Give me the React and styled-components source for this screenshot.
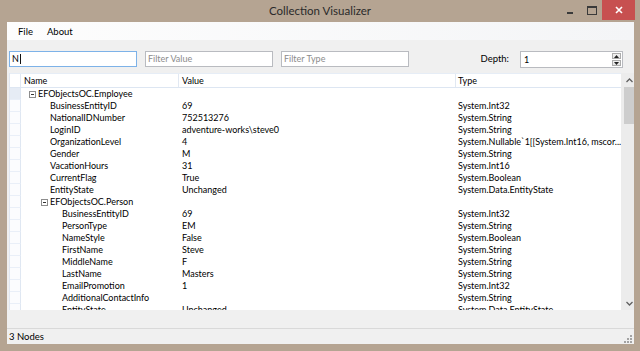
import React from 'react';
import styled, { createGlobalStyle } from 'styled-components';

const GlobalStyle = createGlobalStyle`
  html, body {
    margin: 0;
    padding: 0;
    background: #b5a492;
  }
  body {
    font-family: Lato, "Open Sans", sans-serif;
    color: #000;
  }
`;

const Window = styled.div`
  width: 640px;
  height: 351px;
  display: flex;
  flex-direction: column;
  background: #b5a492;
  overflow: hidden;
`;

const TitleBar = styled.div`
  height: 22px;
  display: grid;
  grid-template-columns: 1fr auto 1fr;
  align-items: start;
`;

const Title = styled.div`
  grid-column: 2;
  line-height: 22px;
  font-size: 11.5px;
  color: #2a2a2a;
`;

const Controls = styled.div`
  grid-column: 3;
  justify-self: end;
  display: flex;
  align-items: flex-start;
  margin-right: 5px;
`;

const CtrlButton = styled.div`
  width: ${(p) => p.w}px;
  height: 20px;
  display: flex;
  align-items: center;
  justify-content: center;
  background: ${(p) => (p.close ? '#c75050' : 'transparent')};
`;

const Client = styled.div`
  flex: 1;
  margin: 0 6px 7px 7px;
  display: flex;
  flex-direction: column;
  background: #f0f0f0;
  min-height: 0;
`;

const MenuBar = styled.div`
  height: 18px;
  display: flex;
  align-items: center;
  padding-left: 4px;
  background: linear-gradient(to right, #fdfdfd, #f4f5f7);
`;

const MenuItem = styled.div`
  padding: 0 7px;
  font-size: 9.5px;
`;

const Toolbar = styled.div`
  height: 33px;
  box-sizing: border-box;
  padding: 11px 11px 0 2px;
  display: flex;
  align-items: flex-start;
  gap: 8px;
`;

const FilterInput = styled.div`
  width: 128px;
  height: 16px;
  box-sizing: border-box;
  border: 1px solid ${(p) => (p.focused ? '#7db2e8' : '#b9bbc0')};
  background: #fff;
  padding: 0 2px;
  font-size: 9px;
  line-height: 14px;
  color: ${(p) => (p.placeholder ? '#8c8c8c' : '#000')};
  display: flex;
  align-items: center;
`;

const Caret = styled.span`
  display: inline-block;
  width: 1px;
  height: 10px;
  background: #111;
  margin-left: 1px;
`;

const Spacer = styled.div`
  flex: 1;
`;

const DepthLabel = styled.div`
  font-size: 9.5px;
  line-height: 16px;
  margin-right: 3px;
`;

const NumericBox = styled.div`
  width: 103px;
  height: 17px;
  box-sizing: border-box;
  border: 1px solid #b9bbc0;
  background: #fff;
  display: flex;
  font-size: 9px;
`;

const NumericValue = styled.div`
  flex: 1;
  padding: 1px 3px;
  line-height: 13px;
`;

const SpinColumn = styled.div`
  width: 9px;
  display: flex;
  flex-direction: column;
  gap: 1px;
  padding: 1px 1px 1px 0;
`;

const SpinButton = styled.div`
  flex: 1;
  border: 1px solid #acacac;
  background: linear-gradient(#f2f2f2, #e4e4e4);
  display: flex;
  align-items: center;
  justify-content: center;
`;

const GridArea = styled.div`
  height: 237px;
  margin: 0 0 18px 2px;
  display: flex;
`;

const Grid = styled.div`
  flex: 1;
  display: flex;
  flex-direction: column;
  background: #fff;
  border-left: 1px solid #dfe6f0;
  overflow: hidden;
  font-size: 9px;
`;

const columns = '11px 158px 277px 1fr';

const HeaderRow = styled.div`
  display: grid;
  grid-template-columns: ${columns};
  height: 15px;
  flex-shrink: 0;
  box-sizing: border-box;
  border-bottom: 1px solid #dde6f2;
  border-top: 1px solid #e6edf6;
`;

const HeaderCell = styled.div`
  border-right: 1px solid ${(p) => (p.last ? 'transparent' : '#e1e8f2')};
  padding-left: ${(p) => p.pad}px;
  line-height: 13px;
  white-space: nowrap;
`;

const Row = styled.div`
  display: grid;
  grid-template-columns: ${columns};
  height: 12px;
  flex-shrink: 0;
  line-height: 12px;
`;

const RowHeader = styled.div`
  box-sizing: border-box;
  border-right: 1px solid #dfe7f2;
  border-bottom: 1px solid #e9eff8;
  background: ${(p) => (p.current ? '#e6ecf5' : '#fbfcfe')};
`;

const NameCell = styled.div`
  display: flex;
  align-items: center;
  padding-left: ${(p) => 8 + p.level * 12}px;
  white-space: nowrap;
  overflow: hidden;
`;

const ExpanderSlot = styled.div`
  width: 9px;
  flex-shrink: 0;
  display: flex;
  align-items: center;
`;

const TextCell = styled.div`
  padding-left: ${(p) => p.pad}px;
  padding-right: 2px;
  white-space: nowrap;
  overflow: hidden;
`;

const ScrollBar = styled.div`
  width: 13px;
  display: flex;
  flex-direction: column;
  align-items: flex-end;
  background: #ececec;
`;

const ScrollArrow = styled.div`
  width: 10px;
  height: 14px;
  display: flex;
  align-items: center;
  justify-content: center;
`;

const Thumb = styled.div`
  width: 10px;
  height: 37px;
  background: #cdcdcd;
`;

const StatusBar = styled.div`
  height: 16px;
  box-sizing: border-box;
  border-top: 1px solid #d9d9d9;
  display: flex;
  align-items: center;
  justify-content: space-between;
  padding: 0 2px 0 2px;
  font-size: 9.5px;
`;

const Grip = styled.svg`
  align-self: flex-end;
  margin-bottom: 1px;
`;

const rows = [
  { level: 0, name: 'EFObjectsOC.Employee', node: true },
  { level: 1, name: 'BusinessEntityID', value: '69', type: 'System.Int32' },
  { level: 1, name: 'NationalIDNumber', value: '752513276', type: 'System.String' },
  { level: 1, name: 'LoginID', value: 'adventure-works\\steve0', type: 'System.String' },
  { level: 1, name: 'OrganizationLevel', value: '4', type: 'System.Nullable`1[[System.Int16, mscor...' },
  { level: 1, name: 'Gender', value: 'M', type: 'System.String' },
  { level: 1, name: 'VacationHours', value: '31', type: 'System.Int16' },
  { level: 1, name: 'CurrentFlag', value: 'True', type: 'System.Boolean' },
  { level: 1, name: 'EntityState', value: 'Unchanged', type: 'System.Data.EntityState' },
  { level: 1, name: 'EFObjectsOC.Person', node: true },
  { level: 2, name: 'BusinessEntityID', value: '69', type: 'System.Int32' },
  { level: 2, name: 'PersonType', value: 'EM', type: 'System.String' },
  { level: 2, name: 'NameStyle', value: 'False', type: 'System.Boolean' },
  { level: 2, name: 'FirstName', value: 'Steve', type: 'System.String' },
  { level: 2, name: 'MiddleName', value: 'F', type: 'System.String' },
  { level: 2, name: 'LastName', value: 'Masters', type: 'System.String' },
  { level: 2, name: 'EmailPromotion', value: '1', type: 'System.Int32' },
  { level: 2, name: 'AdditionalContactInfo', value: '', type: 'System.String' },
  { level: 2, name: 'EntityState', value: 'Unchanged', type: 'System.Data.EntityState' },
];

const Expander = () => (
  <svg width="7" height="7" viewBox="0 0 7 7">
    <rect x="0.5" y="0.5" width="6" height="6" fill="#fff" stroke="#8d8d8d" />
    <line x1="2" y1="3.5" x2="5" y2="3.5" stroke="#333" />
  </svg>
);

const Chevron = ({ down }) => (
  <svg width="7" height="5" viewBox="0 0 7 5">
    <polyline
      points={down ? '0.5,1 3.5,4 6.5,1' : '0.5,4 3.5,1 6.5,4'}
      fill="none"
      stroke="#606060"
      strokeWidth="1.3"
    />
  </svg>
);

const SpinArrow = ({ down }) => (
  <svg width="5" height="3" viewBox="0 0 5 3">
    <polygon points={down ? '0,0 5,0 2.5,3' : '0,3 5,3 2.5,0'} fill="#222" />
  </svg>
);

export default function App() {
  return (
    <Window>
      <GlobalStyle />
      <TitleBar>
        <Title>Collection Visualizer</Title>
        <Controls>
          <CtrlButton w={24}>
            <svg width="8" height="8" viewBox="0 0 8 8">
              <rect x="1" y="6" width="6" height="2" fill="#3a3a3a" />
            </svg>
          </CtrlButton>
          <CtrlButton w={20}>
            <svg width="10" height="9" viewBox="0 0 10 9">
              <rect x="0.5" y="0.5" width="9" height="8" fill="none" stroke="#3a3a3a" />
              <rect x="0" y="0" width="10" height="2" fill="#3a3a3a" />
            </svg>
          </CtrlButton>
          <CtrlButton w={33} close>
            <svg width="8" height="8" viewBox="0 0 8 8">
              <path d="M1 1 L7 7 M7 1 L1 7" stroke="#fff" strokeWidth="1.6" />
            </svg>
          </CtrlButton>
        </Controls>
      </TitleBar>
      <Client>
        <MenuBar>
          <MenuItem>File</MenuItem>
          <MenuItem>About</MenuItem>
        </MenuBar>
        <Toolbar>
          <FilterInput focused>
            N<Caret />
          </FilterInput>
          <FilterInput placeholder>Filter Value</FilterInput>
          <FilterInput placeholder>Filter Type</FilterInput>
          <Spacer />
          <DepthLabel>Depth:</DepthLabel>
          <NumericBox>
            <NumericValue>1</NumericValue>
            <SpinColumn>
              <SpinButton>
                <SpinArrow />
              </SpinButton>
              <SpinButton>
                <SpinArrow down />
              </SpinButton>
            </SpinColumn>
          </NumericBox>
        </Toolbar>
        <GridArea>
          <Grid>
            <HeaderRow>
              <HeaderCell />
              <HeaderCell pad={3}>Name</HeaderCell>
              <HeaderCell pad={3}>Value</HeaderCell>
              <HeaderCell pad={2} last>Type</HeaderCell>
            </HeaderRow>
            {rows.map((r, i) => (
              <Row key={i}>
                <RowHeader current={i === 0} />
                <NameCell level={r.level}>
                  <ExpanderSlot>{r.node ? <Expander /> : null}</ExpanderSlot>
                  {r.name}
                </NameCell>
                <TextCell pad={3}>{r.value}</TextCell>
                <TextCell pad={2}>{r.type}</TextCell>
              </Row>
            ))}
          </Grid>
          <ScrollBar>
            <ScrollArrow>
              <Chevron />
            </ScrollArrow>
            <Thumb />
            <Spacer />
            <ScrollArrow>
              <Chevron down />
            </ScrollArrow>
          </ScrollBar>
        </GridArea>
        <StatusBar>
          <span>3 Nodes</span>
          <Grip width="8" height="8" viewBox="0 0 8 8">
            {[[6, 0], [3, 3], [6, 3], [0, 6], [3, 6], [6, 6]].map(([x, y]) => (
              <rect key={`${x}-${y}`} x={x} y={y} width="2" height="2" fill="#a3a3a3" />
            ))}
          </Grip>
        </StatusBar>
      </Client>
    </Window>
  );
}
